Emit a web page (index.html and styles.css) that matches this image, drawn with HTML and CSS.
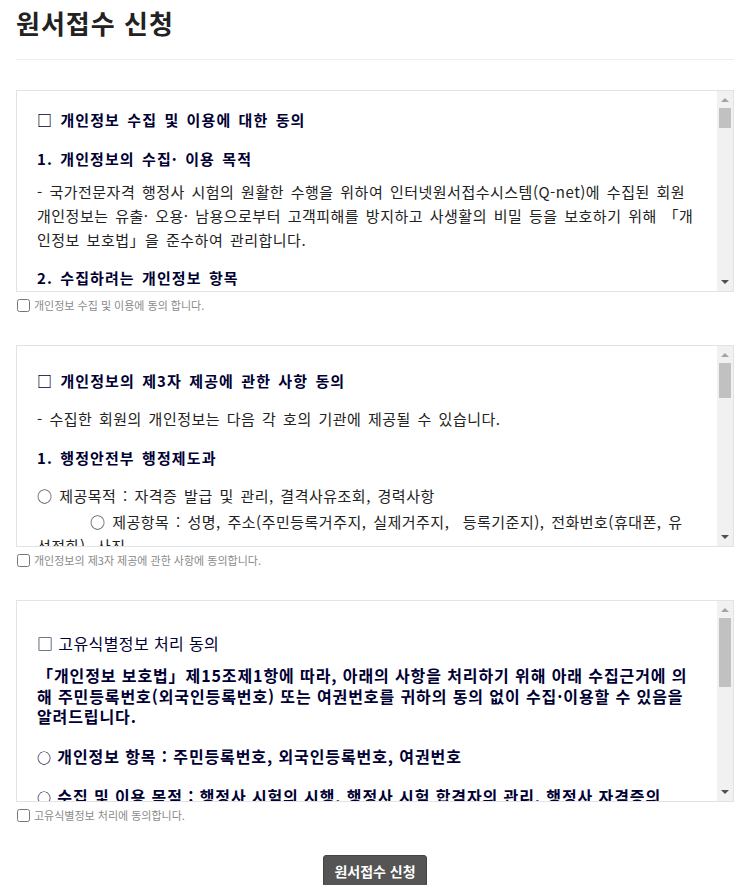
FILE: index.html
```html
<!DOCTYPE html>
<html lang="ko">
<head>
<meta charset="utf-8">
<title>원서접수 신청</title>
<link rel="stylesheet" href="styles.css">
</head>
<body>
<div class="page">
  <h1 class="title">원서접수 신청</h1>
  <div class="rule"></div>

  <div class="box b1">
    <div class="scroll">
      <p class="head first">□ 개인정보 수집 및 이용에 대한 동의</p>
      <p class="head">1. 개인정보의 수집· 이용 목적</p>
      <p class="body">- 국가전문자격 행정사 시험의 원활한 수행을 위하여 인터넷원서접수시스템(Q-net)에 수집된 회원<br>개인정보는 유출· 오용· 남용으로부터 고객피해를 방지하고 사생활의 비밀 등을 보호하기 위해 「개<br>인정보 보호법」을 준수하여 관리합니다.</p>
      <p class="head">2. 수집하려는 개인정보 항목</p>
      <p class="body">○ 필수항목 : 성명, 주민등록번호(외국인등록번호), 주소, 전화번호(휴대폰, 유선전화), 이메일, 사진</p>
      <p class="body">○ 선택항목 : 학력사항, 경력사항, 자격사항</p>
      <p class="head">3. 개인정보의 보유 및 이용 기간</p>
      <p class="body">- 수집된 개인정보는 시험 시행 및 합격자 관리 목적이 달성될 때까지 보유·이용하며, 관계 법령에 따라 보존할 필요가 있는 경우 해당 기간 동안 보관합니다.</p>
      <p class="head">4. 동의를 거부할 권리 및 거부에 따른 불이익</p>
      <p class="body">- 귀하는 개인정보 수집·이용에 대한 동의를 거부할 권리가 있습니다. 다만, 필수항목에 대한 동의를 거부할 경우 원서접수가 제한될 수 있습니다.</p>
    </div>
    <div class="sbar" aria-hidden="true"><span class="arrow up"></span><span class="thumb"></span><span class="fill"></span><span class="arrow down"></span></div>
  </div>
  <label class="agree"><input type="checkbox" class="check"><span>개인정보 수집 및 이용에 동의 합니다.</span></label>

  <div class="box b2">
    <div class="scroll">
      <p class="head first">□ 개인정보의 제3자 제공에 관한 사항 동의</p>
      <p class="body">- 수집한 회원의 개인정보는 다음 각 호의 기관에 제공될 수 있습니다.</p>
      <p class="head">1. 행정안전부 행정제도과</p>
      <p class="body tight">○ 제공목적 : 자격증 발급 및 관리, 결격사유조회, 경력사항</p>
      <p class="body indent">○ 제공항목 : 성명, 주소(주민등록거주지, 실제거주지,&nbsp; 등록기준지), 전화번호(휴대폰, 유<br>선전화), 사진</p>
      <p class="body">○ 보유 및 이용기간 : 자격 취득 후 영구</p>
      <p class="head">2. 한국산업인력공단</p>
      <p class="body tight">○ 제공목적 : 시험 시행 및 합격자 관리</p>
      <p class="body">○ 제공항목 : 성명, 주민등록번호, 주소, 전화번호, 사진</p>
    </div>
    <div class="sbar" aria-hidden="true"><span class="arrow up"></span><span class="thumb"></span><span class="fill"></span><span class="arrow down"></span></div>
  </div>
  <label class="agree"><input type="checkbox" class="check"><span>개인정보의 제3자 제공에 관한 사항에 동의합니다.</span></label>

  <div class="box b3">
    <div class="scroll">
      <p class="uhead">□ 고유식별정보 처리 동의</p>
      <p class="ubody"> 「개인정보 보호법」제15조제1항에 따라, 아래의 사항을 처리하기 위해 아래 수집근거에 의<br>해 주민등록번호(외국인등록번호) 또는 여권번호를 귀하의 동의 없이 수집·이용할 수 있음을<br>알려드립니다.</p>
      <p class="ubody"><span class="o">○</span> 개인정보 항목 : 주민등록번호, 외국인등록번호, 여권번호</p>
      <p class="ubody"><span class="o">○</span> 수집 및 이용 목적 : 행정사 시험의 시행, 행정사 시험 합격자의 관리, 행정사 자격증의<br>발급 및 관리</p>
      <p class="ubody"><span class="o">○</span> 수집 근거 : 행정사법 시행령 제30조의2</p>
    </div>
    <div class="sbar" aria-hidden="true"><span class="arrow up"></span><span class="thumb"></span><span class="fill"></span><span class="arrow down"></span></div>
  </div>
  <label class="agree"><input type="checkbox" class="check"><span>고유식별정보 처리에 동의합니다.</span></label>

  <div class="actions">
    <button type="button" class="submit">원서접수 신청</button>
  </div>
</div>
</body>
</html>
```

FILE: styles.css
```css
html, body {
  margin: 0;
  padding: 0;
  background: #ffffff;
}

.page {
  padding: 0 9px 0 16px;
  font-family: "Noto Sans CJK KR", "Noto Sans", sans-serif;
  color: #222222;
}

.title {
  margin: 0;
  padding-top: 6px;
  font-size: 26px;
  line-height: 34px;
  font-weight: 700;
  color: #222222;
  letter-spacing: 1px;
}

.rule {
  margin-top: 19px;
  height: 1px;
  background: #eeeeee;
}

/* scroll boxes */
.box {
  position: relative;
  margin-top: 30px;
  border: 1px solid #e3e3e3;
}

.b2, .b3 {
  margin-top: 33px;
}

.scroll {
  height: 200px;
  overflow-y: auto;
  padding: 0 22px 0 20px;
  scrollbar-width: none;
}

.scroll::-webkit-scrollbar {
  display: none;
}

.sbar {
  position: absolute;
  top: 0;
  right: 0;
  bottom: 0;
  width: 16px;
  background: #f1f1f1;
  display: flex;
  flex-direction: column;
}

.arrow {
  height: 17px;
  display: flex;
  align-items: center;
  justify-content: center;
}

.arrow::before {
  content: "";
  width: 0;
  height: 0;
  border-left: 4px solid transparent;
  border-right: 4px solid transparent;
}

.arrow.up::before {
  border-bottom: 4px solid #a3a3a3;
  margin-top: 1px;
}

.arrow.down::before {
  border-top: 4px solid #505050;
  margin-bottom: 1px;
}

.thumb {
  margin: 0 2px;
  background: #c1c1c1;
  height: 20px;
}

.b2 .thumb {
  height: 35px;
}

.b3 .thumb {
  height: 69px;
}

.fill {
  flex: 1;
}

/* text */
.scroll p {
  margin: 0;
}

.head {
  font-size: 15px;
  line-height: 24px;
  font-weight: 700;
  color: #000033;
  letter-spacing: 1.1px;
  word-spacing: 2px;
  margin-bottom: 9px !important;
}

.head + .head {
  margin-top: 15px !important;
}

.head.first {
  margin-top: 17px !important;
}

.b2 .head {
  margin-bottom: 14px !important;
}

.b2 .head.first {
  margin-top: 23px !important;
}

.body {
  font-size: 15px;
  line-height: 24px;
  color: #222222;
  letter-spacing: 0.5px;
  word-spacing: 2px;
  margin-bottom: 14px !important;
}

.b2 .body {
  margin-bottom: 15px !important;
}

.b2 .body.tight {
  margin-bottom: 2px !important;
}

.body.indent {
  text-indent: 53px;
}

.uhead {
  margin-top: 30px !important;
  font-size: 16px;
  line-height: 24px;
  color: #000033;
  letter-spacing: 0.4px;
  margin-bottom: 10px !important;
}

.ubody {
  font-size: 16px;
  line-height: 20.5px;
  font-weight: 700;
  color: #000033;
  letter-spacing: 0.9px;
  margin-bottom: 19px !important;
}

.o {
  font-size: 14px;
}

.agree {
  display: flex;
  align-items: center;
  gap: 4px;
  margin-top: 6px;
  font-size: 11px;
  line-height: 14px;
  color: #8a8a8a;
}

.check {
  margin: 0 0 0 1px;
  width: 13px;
  height: 13px;
}

.actions {
  display: flex;
  justify-content: center;
  margin-top: 33px;
}

.submit {
  background: #555555;
  color: #ffffff;
  border: 1px solid #444444;
  border-radius: 3px;
  font-family: "Noto Sans CJK KR", "Noto Sans", sans-serif;
  font-size: 14px;
  font-weight: 700;
  width: 104px;
  height: 32px;
  padding: 0;
}
```
